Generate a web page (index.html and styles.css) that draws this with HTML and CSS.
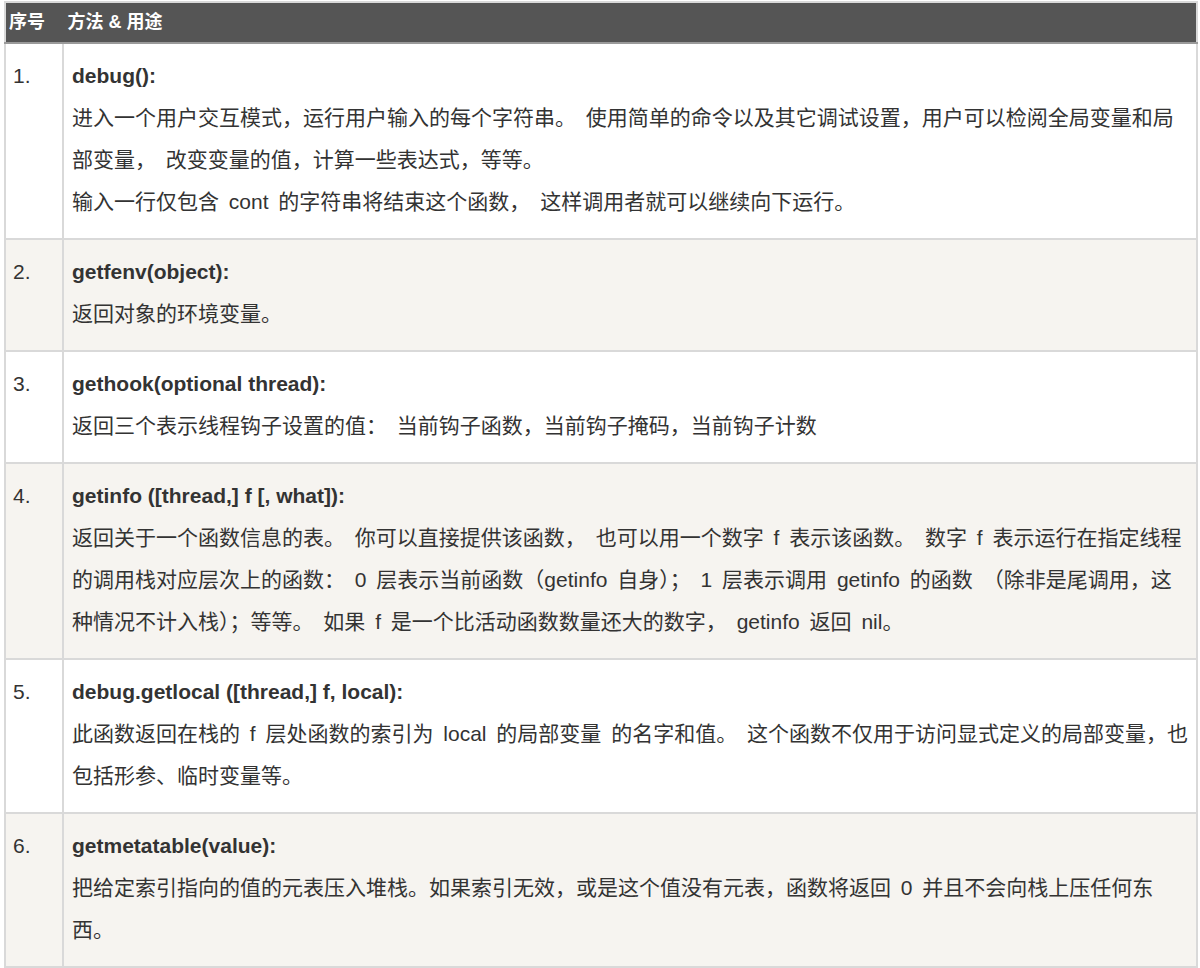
FILE: index.html
```html
<!DOCTYPE html>
<html lang="zh-CN">
<head>
  <meta charset="UTF-8">
  <meta name="viewport" content="width=device-width, initial-scale=1.0">
  <title>Lua 调试库</title>
  <link rel="stylesheet" href="styles.css">
</head>
<body>
  <!-- Debug library reference -->
  <table class="reference">
    <thead>
      <tr>
        <th class="col-num">序号</th>
        <th>方法 &amp; 用途</th>
      </tr>
    </thead>
    <tbody>
      <tr>
        <td class="num">1.</td>
        <td>
          <p class="method">debug():</p>
          <p>进入一个用户交互模式，运行用户输入的每个字符串。 使用简单的命令以及其它调试设置，用户可以检阅全局变量和局部变量， 改变变量的值，计算一些表达式，等等。</p>
          <p>输入一行仅包含 cont 的字符串将结束这个函数， 这样调用者就可以继续向下运行。</p>
        </td>
      </tr>
      <tr>
        <td class="num">2.</td>
        <td>
          <p class="method">getfenv(object):</p>
          <p>返回对象的环境变量。</p>
        </td>
      </tr>
      <tr>
        <td class="num">3.</td>
        <td>
          <p class="method">gethook(optional thread):</p>
          <p>返回三个表示线程钩子设置的值： 当前钩子函数，当前钩子掩码，当前钩子计数</p>
        </td>
      </tr>
      <tr>
        <td class="num">4.</td>
        <td>
          <p class="method">getinfo ([thread,] f [, what]):</p>
          <p>返回关于一个函数信息的表。 你可以直接提供该函数， 也可以用一个数字 f 表示该函数。 数字 f 表示运行在指定线程的调用栈对应层次上的函数： 0 层表示当前函数（getinfo 自身）； 1 层表示调用 getinfo 的函数 （除非是尾调用，这种情况不计入栈）；等等。 如果 f 是一个比活动函数数量还大的数字， getinfo 返回 nil。</p>
        </td>
      </tr>
      <tr>
        <td class="num">5.</td>
        <td>
          <p class="method">debug.getlocal ([thread,] f, local):</p>
          <p>此函数返回在栈的 f 层处函数的索引为 local 的局部变量 的名字和值。 这个函数不仅用于访问显式定义的局部变量，也包括形参、临时变量等。</p>
        </td>
      </tr>
      <tr>
        <td class="num">6.</td>
        <td>
          <p class="method">getmetatable(value):</p>
          <p>把给定索引指向的值的元表压入堆栈。如果索引无效，或是这个值没有元表，函数将返回 0 并且不会向栈上压任何东西。</p>
        </td>
      </tr>
      <tr>
        <td class="num">7.</td>
        <td>
          <p class="method">getregistry():</p>
          <p>返回注册表表，这是一个预定义出来的表， 可以用来保存任何 C 代码想保存的 Lua 值。</p>
        </td>
      </tr>
      <tr>
        <td class="num">8.</td>
        <td>
          <p class="method">getupvalue (f, up)</p>
          <p>此函数返回函数 f 的第 up 个上值的名字和值。 如果该函数没有那个上值，返回 nil 。</p>
        </td>
      </tr>
    </tbody>
  </table>
</body>
</html>
```

FILE: styles.css
```css
* {
  box-sizing: border-box;
}

body {
  margin: 0;
  padding: 1px 2px 0 4px;
  font-family: "Liberation Sans", "Noto Sans CJK SC", sans-serif;
  color: #333;
  background: #fff;
}

/* Reference table */
.reference {
  width: 100%;
  border-collapse: collapse;
  border: 2px solid #d9d9d9;
}

.reference th {
  background: #555;
  color: #fff;
  font-size: 18px;
  font-weight: bold;
  line-height: 21px;
  text-align: left;
  padding: 9px 4px;
  border: 1px solid #555;
  border-bottom: 2px solid #9a9a9a;
}

.reference .col-num {
  width: 58px;
  padding-left: 3px;
}

.reference td {
  border: 2px solid #d9d9d9;
  vertical-align: top;
  font-size: 21px;
  line-height: 42px;
  word-spacing: 4px;
  padding: 11px 6px 15px 8px;
}

.reference .num {
  padding-left: 7px;
  padding-right: 4px;
}

.reference tbody tr:nth-child(even) td {
  background: #f6f4f0;
}

.reference p {
  margin: 0;
}

.reference .method {
  font-weight: bold;
  word-spacing: 0;
}
```
